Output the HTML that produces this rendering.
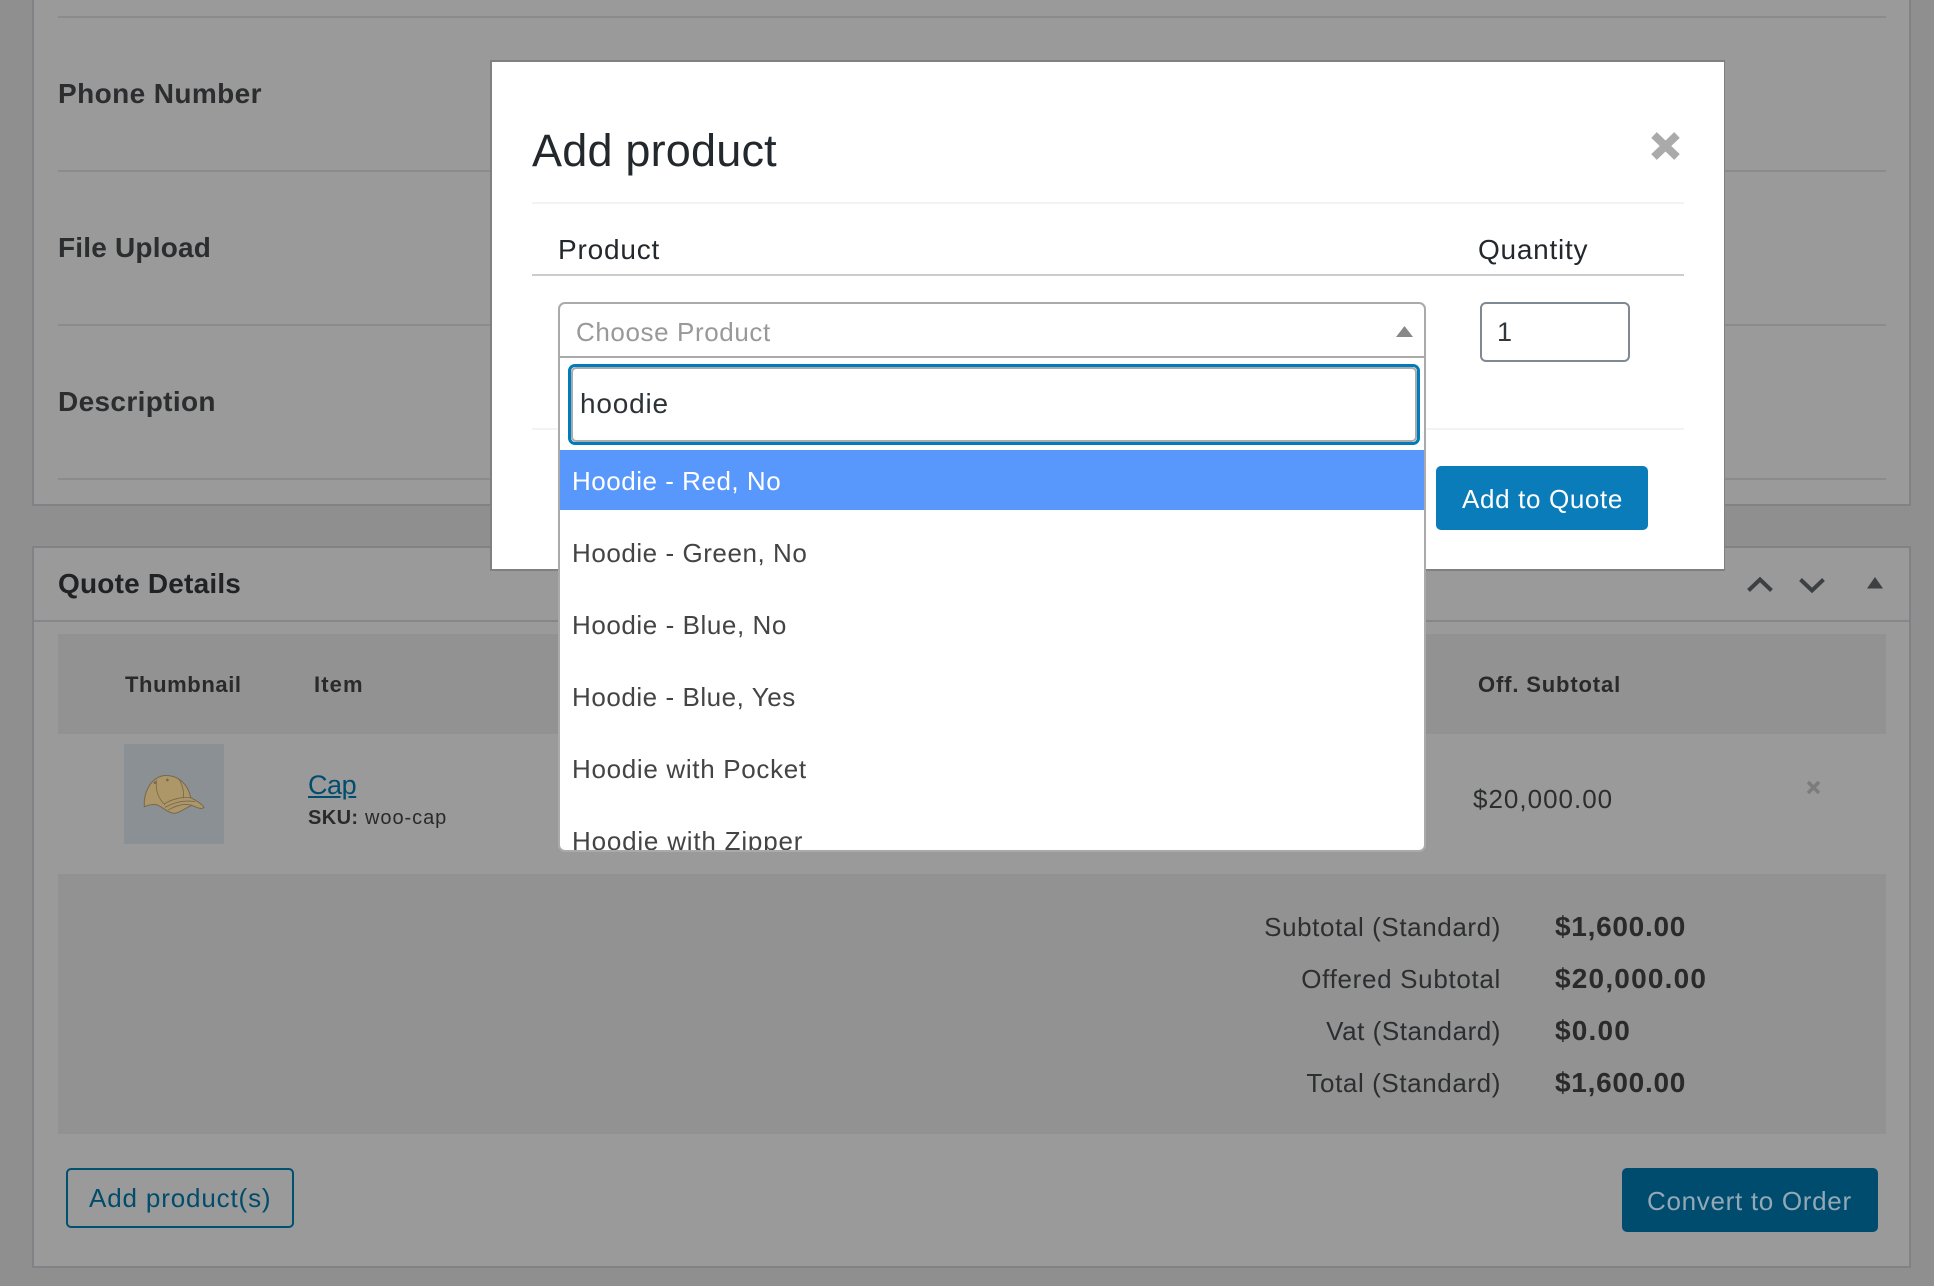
<!DOCTYPE html>
<html lang="en">
<head>
<meta charset="utf-8">
<title>Add product</title>
<style>
html,body{margin:0;padding:0;width:1934px;height:1286px;overflow:hidden;background:#8f8f8f;font-family:"Liberation Sans",Arial,sans-serif}
div,a,span{position:absolute;box-sizing:border-box}
.t{white-space:nowrap;line-height:40px;height:40px}
.line{height:2px;left:58px;width:1828px;background:#8b8b8b}
.lab{left:58px;font-weight:700;font-size:28px;letter-spacing:.35px;color:#2b2d2f}
.th{font-weight:700;font-size:22px;letter-spacing:.6px;color:#2a2a2a}
.opt{left:572px;font-size:26px;letter-spacing:.65px;color:#444}
.tl{right:433px;font-size:26px;letter-spacing:.6px;color:#2c2e30;text-align:right}
.tv{left:1555px;font-size:28px;font-weight:700;letter-spacing:.72px;color:#2a2a2a}
</style>
</head>
<body>
<div style="left:32px;top:-10px;width:1879px;height:516px;background:#9a9a9a;border:2px solid #808285;border-top:0"></div>
<div class="line" style="top:16px"></div>
<div class="line" style="top:170px"></div>
<div class="line" style="top:324px"></div>
<div class="line" style="top:478px"></div>
<div class="t lab" style="top:74px;letter-spacing:.4px">Phone Number</div>
<div class="t lab" style="top:228px;letter-spacing:.2px">File Upload</div>
<div class="t lab" style="top:382px">Description</div>

<div style="left:32px;top:546px;width:1879px;height:722px;background:#9a9a9a;border:2px solid #808285"></div>
<div style="left:34px;top:620px;width:1875px;height:2px;background:#85878a"></div>
<div class="t lab" style="top:564px;color:#202224;letter-spacing:.2px">Quote Details</div>
<svg style="position:absolute;left:1745px;top:575px" width="140" height="20" viewBox="0 0 140 20">
<path d="M3.500 15.500L15 4.500L26.500 15.500" fill="none" stroke="#3c4043" stroke-width="4"/>
<path d="M55.500 4.500L67 15.500L78.500 4.500" fill="none" stroke="#3c4043" stroke-width="4"/>
<path d="M122 13.500L130 2L138 13.500Z" fill="#3c4043"/>
</svg>

<div style="left:58px;top:634px;width:1828px;height:100px;background:#929292"></div>
<div class="t th" style="left:125px;top:665px">Thumbnail</div>
<div class="t th" style="left:314px;top:665px;letter-spacing:1.1px">Item</div>
<div class="t th" style="left:1478px;top:665px;letter-spacing:.85px">Off. Subtotal</div>
<div style="left:124px;top:744px;width:100px;height:100px;background:#8b9095"></div>
<svg style="position:absolute;left:124px;top:744px" width="100" height="100" viewBox="72 42 300 300">
<path d="M133 230C130 190 150 145 190 137C235 132 265 165 272 203C290 212 305 222 312 232C305 240 290 232 275 226C255 235 240 248 225 250C205 250 190 232 170 224C155 222 145 226 133 230Z" fill="#ad9768" stroke="#75684f" stroke-width="3"/>
<path d="M170 150C165 180 175 205 195 225M235 145C250 165 252 190 250 205M192 222C220 205 250 200 272 203M195 232C225 215 255 210 285 215M205 240C230 225 255 220 275 226" fill="none" stroke="#75684f" stroke-width="2.500"/>
<circle cx="165" cy="158" r="4" fill="#75684f"/><circle cx="202" cy="150" r="4" fill="#75684f"/>
</svg>
<a class="t" style="left:308px;top:765px;font-size:27px;letter-spacing:-.45px;color:#004d70;text-decoration:underline">Cap</a>
<div class="t" style="left:308px;top:798px;font-size:20px;letter-spacing:.95px;color:#2a2a2a"><b style="letter-spacing:.4px">SKU:</b> woo-cap</div>
<div class="t" style="left:1473px;top:779px;font-size:26px;letter-spacing:1px;color:#2b2d2f">$20,000.00</div>
<svg style="position:absolute;left:1806px;top:780px" width="15" height="15" viewBox="0 0 15 15"><path d="M2 2L13 13M13 2L2 13" stroke="#7c7c7c" stroke-width="3.500"/></svg>

<div style="left:58px;top:874px;width:1828px;height:260px;background:#929292"></div>
<div class="t tl" style="top:907px">Subtotal (Standard)</div>
<div class="t tl" style="top:959px;letter-spacing:.68px">Offered Subtotal</div>
<div class="t tl" style="top:1011px;letter-spacing:.55px">Vat (Standard)</div>
<div class="t tl" style="top:1063px">Total (Standard)</div>
<div class="t tv" style="top:907px">$1,600.00</div>
<div class="t tv" style="top:959px;letter-spacing:1.2px">$20,000.00</div>
<div class="t tv" style="top:1011px;letter-spacing:1.2px">$0.00</div>
<div class="t tv" style="top:1063px">$1,600.00</div>

<div style="left:66px;top:1168px;width:228px;height:60px;border:2px solid #00506f;border-radius:5px"></div>
<div class="t" style="left:89px;top:1178px;font-size:26px;letter-spacing:.85px;color:#004c6a">Add product(s)</div>
<div style="left:1622px;top:1168px;width:256px;height:64px;background:#004c6f;border-radius:5px"></div>
<div class="t" style="left:1647px;top:1181px;font-size:26px;letter-spacing:.7px;color:#93a8b4">Convert to Order</div>

<!-- modal -->
<div style="left:490px;top:60px;width:1235px;height:511px;background:#fff;border:2px solid #808080;border-right-width:1px"></div>
<div class="t" style="left:532px;top:131px;font-size:45px;letter-spacing:.2px;color:#23282d">Add product</div>
<svg style="position:absolute;left:1649px;top:130px" width="33" height="32" viewBox="0 0 33 32"><path d="M5 5L28 27M28 5L5 27" stroke="#aaa" stroke-width="8"/></svg>
<div style="left:532px;top:202px;width:1152px;height:2px;background:#f3f3f3"></div>
<div class="t" style="left:558px;top:230px;font-size:28px;letter-spacing:.8px;color:#23282d">Product</div>
<div class="t" style="left:1478px;top:230px;font-size:28px;letter-spacing:.75px;color:#23282d">Quantity</div>
<div style="left:532px;top:274px;width:1152px;height:2px;background:#ccc"></div>
<div style="left:532px;top:428px;width:1152px;height:2px;background:#f3f3f3"></div>
<div style="left:1480px;top:302px;width:150px;height:60px;border:2px solid #7e8993;border-radius:6px;background:#fff"></div>
<div class="t" style="left:1497px;top:312px;font-size:27px;color:#32373c">1</div>
<div style="left:1436px;top:466px;width:212px;height:64px;background:#0a7cba;border-radius:5px"></div>
<div class="t" style="left:1462px;top:479px;font-size:26px;letter-spacing:.65px;color:#fff">Add to Quote</div>

<!-- select -->
<div style="left:558px;top:302px;width:868px;height:56px;background:#fff;border:2px solid #aaa;border-radius:7px 7px 0 0"></div>
<div class="t" style="left:576px;top:312px;font-size:26px;letter-spacing:.6px;color:#999">Choose Product</div>
<svg style="position:absolute;left:1396px;top:326px" width="17" height="11" viewBox="0 0 17 11"><path d="M0 11L8.500 0L17 11Z" fill="#888"/></svg>
<div style="left:558px;top:356px;width:868px;height:496px;background:#fff;border:2px solid #aaa;border-radius:0 0 7px 7px;overflow:hidden">
<div style="left:8px;top:6px;width:852px;height:81px;border:3px solid #007cba;border-radius:7px"><div style="left:0;top:0;width:846px;height:75px;border:2px solid #aaa;border-radius:5px"></div></div>
<div style="left:0;top:92px;width:864px;height:60px;background:#5897fb"></div>
</div>
<div class="t" style="left:580px;top:384px;font-size:28px;letter-spacing:.8px;color:#2c3338">hoodie</div>
<div class="t opt" style="top:461px;color:#fff;letter-spacing:.52px">Hoodie - Red, No</div>
<div class="t opt" style="top:533px;letter-spacing:.55px">Hoodie - Green, No</div>
<div class="t opt" style="top:605px;letter-spacing:.57px">Hoodie - Blue, No</div>
<div class="t opt" style="top:677px;letter-spacing:.55px">Hoodie - Blue, Yes</div>
<div class="t opt" style="top:749px;letter-spacing:.68px">Hoodie with Pocket</div>
<div style="left:560px;top:810px;width:864px;height:40px;overflow:hidden"><div class="t opt" style="left:12px;top:11px;letter-spacing:.8px">Hoodie with Zipper</div></div>
</body>
</html>
